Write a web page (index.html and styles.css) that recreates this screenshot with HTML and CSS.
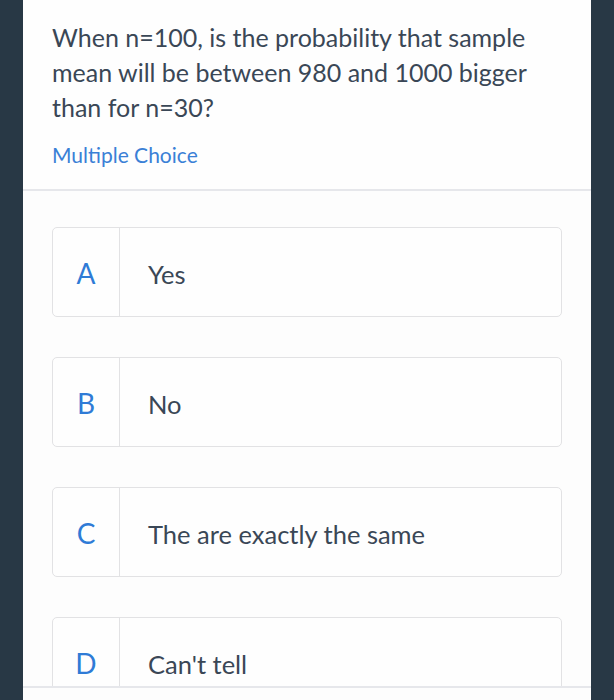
FILE: index.html
```html
<!DOCTYPE html>
<html>
<head>
<meta charset="utf-8">
<link rel="stylesheet" href="styles.css">
</head>
<body>
<div class="panel">
  <div class="question">
    <p class="q-text">When n=100, is the probability that sample mean will be between 980 and 1000 bigger than for n=30?</p>
    <div class="q-type">Multiple Choice</div>
  </div>
  <div class="options">
    <div class="option"><div class="letter">A</div><div class="label">Yes</div></div>
    <div class="option"><div class="letter">B</div><div class="label">No</div></div>
    <div class="option"><div class="letter">C</div><div class="label">The are exactly the same</div></div>
    <div class="option"><div class="letter">D</div><div class="label">Can't tell</div></div>
  </div>
  <div class="footer"></div>
</div>
</body>
</html>
```
FILE: styles.css
```css
html, body {
  margin: 0;
  padding: 0;
}
body {
  background: #283845;
  font-family: "Lato", "Liberation Sans", sans-serif;
}
.panel {
  margin: 0 23px;
  height: 700px;
  background: #fdfdfd;
  display: flex;
  flex-direction: column;
}
.question {
  padding: 20px 40px 0 29px;
  border-bottom: 2px solid #e6e7eb;
  background: #fefefe;
  box-sizing: border-box;
  height: 191px;
}
.q-text {
  margin: 0;
  font-size: 25px;
  line-height: 35px;
  color: #3a4756;
}
.q-type {
  margin-top: 17px;
  font-size: 21px;
  color: #3a80d6;
}
.options {
  flex: 1;
  overflow: hidden;
  padding: 36px 29px 0 29px;
  display: flex;
  flex-direction: column;
  gap: 40px;
}
.option {
  flex: none;
  height: 88px;
  display: flex;
  border: 1px solid #e2e2e4;
  border-radius: 5px;
  background: #fefefe;
}
.letter {
  width: 66px;
  border-right: 1px solid #e2e2e4;
  display: flex;
  align-items: center;
  justify-content: center;
  padding-top: 2px;
  font-size: 28px;
  color: #2f7bd6;
}
.label {
  display: flex;
  align-items: center;
  padding-left: 28px;
  padding-top: 3px;
  font-size: 25.5px;
  color: #3a4756;
}
.footer {
  height: 12px;
  border-top: 2px solid #e6e7eb;
  background: #fdfdfd;
}
```
